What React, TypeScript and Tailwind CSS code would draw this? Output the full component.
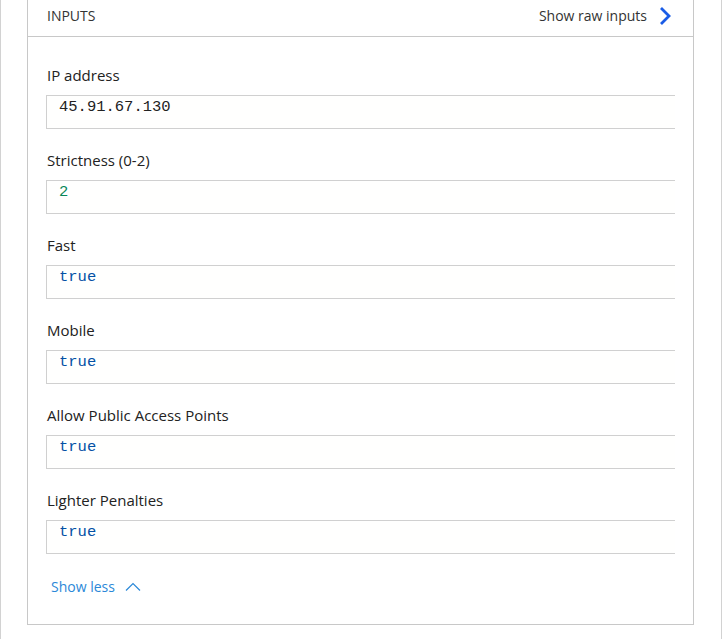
const fields: { label: string; value: string; kind: 'text' | 'number' | 'bool' }[] = [
  { label: 'IP address', value: '45.91.67.130', kind: 'text' },
  { label: 'Strictness (0-2)', value: '2', kind: 'number' },
  { label: 'Fast', value: 'true', kind: 'bool' },
  { label: 'Mobile', value: 'true', kind: 'bool' },
  { label: 'Allow Public Access Points', value: 'true', kind: 'bool' },
  { label: 'Lighter Penalties', value: 'true', kind: 'bool' },
];

const valueColor = {
  text: 'text-[#222222]',
  number: 'text-[#098658]',
  bool: 'text-[#0451a5]',
};

export default function App() {
  return (
    <div className="h-screen bg-white border-x border-[#d2d2d2] pl-[26px] pr-[27px] font-['Open_Sans',sans-serif]">
      <div className="border-x border-b border-[#c8c8c8] bg-white">
        {/* Header */}
        <div className="flex h-[37px] items-center justify-between border-b border-[#c8c8c8] pb-[4px] pl-[19px] pr-[21px]">
          <span className="text-[14px] leading-[20px] text-[#333333]">INPUTS</span>
          <button className="flex items-center gap-[11px] text-[14px] leading-[20px] text-[#333333]">
            Show raw inputs
            <svg width="14" height="20" viewBox="0 0 14 20" fill="none">
              <path d="M3 2 L11 10 L3 18" stroke="#1a5ce6" strokeWidth="2.8" />
            </svg>
          </button>
        </div>

        {/* Fields */}
        <div className="px-[18px] pt-[28px] pb-[27px]">
          {fields.map((f) => (
            <div key={f.label} className="mb-[21px]">
              <div className="pl-[1px] text-[15px] leading-[20px] font-[500] text-[#222222]">{f.label}</div>
              <div className="mt-[10px] h-[34px] border-l border-y border-[#d0d0d0] bg-[#fffffe] pl-[12px] text-[15.5px] leading-[18px]">
                <span className={`font-['Liberation_Mono',monospace] ${valueColor[f.kind]}`}>
                  {f.value}
                </span>
              </div>
            </div>
          ))}
          <button className="ml-[5px] pt-[2px] flex items-center gap-[10px] text-[14px] leading-[20px] text-[#2b88d8]">
            Show less
            <svg width="16" height="10" viewBox="0 0 16 10" fill="none">
              <path d="M1 8.5 L8 1.5 L15 8.5" stroke="#2b88d8" strokeWidth="1.2" />
            </svg>
          </button>
        </div>
      </div>
    </div>
  );
}
